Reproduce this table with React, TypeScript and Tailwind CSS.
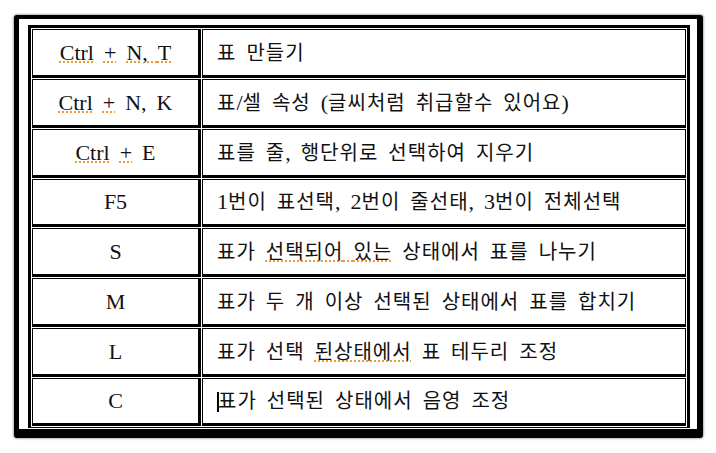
import React from "react";

type Seg = { t: string; u?: boolean };

function Runs({ text }: { text: string }) {
  const parts = text.match(/[\uAC00-\uD7A3\u3131-\u318E]+|\s+|[^\uAC00-\uD7A3\u3131-\u318E\s]+/g) || [];
  return (
    <>
      {parts.map((p, i) =>
        /^\s/.test(p) ? (
          <span key={i} className="tracking-[5px]">
            {p}
          </span>
        ) : /^[\uAC00-\uD7A3\u3131-\u318E]/.test(p) ? (
          <span key={i} className="tracking-[1px]">{p}</span>
        ) : (
          <span key={i} className="text-[22px] tracking-[0px]">
            {p}
          </span>
        )
      )}
    </>
  );
}

function Line({ segs }: { segs: Seg[] }) {
  return (
    <span className="whitespace-pre">
      {segs.map((s, i) =>
        s.u ? (
          <span
            key={i}
            className="underline decoration-dotted decoration-[#ef9a32] decoration-2 underline-offset-[2px]"
          >
            <Runs text={s.t} />
          </span>
        ) : (
          <span key={i}>
            <Runs text={s.t} />
          </span>
        )
      )}
    </span>
  );
}

const rows: { left: Seg[]; right: Seg[]; cursor?: boolean; h: string }[] = [
  {
    left: [{ t: "Ctrl", u: true }, { t: " " }, { t: "+", u: true }, { t: " " }, { t: "N, T", u: true }],
    right: [{ t: "표 만들기" }],
    h: "h-[49px]",
  },
  {
    left: [{ t: "Ctrl", u: true }, { t: " " }, { t: "+", u: true }, { t: " N, K" }],
    right: [{ t: "표/셀 속성 (글씨처럼 취급할수 있어요)" }],
    h: "h-[49px]",
  },
  {
    left: [{ t: "Ctrl", u: true }, { t: " " }, { t: "+", u: true }, { t: " E" }],
    right: [{ t: "표를 줄, 행단위로 선택하여 지우기" }],
    h: "h-[49px]",
  },
  {
    left: [{ t: "F5" }],
    right: [{ t: "1번이 표선택, 2번이 줄선태, 3번이 전체선택" }],
    h: "h-[48px]",
  },
  {
    left: [{ t: "S" }],
    right: [{ t: "표가 " }, { t: "선택되어 있는", u: true }, { t: " 상태에서 표를 나누기" }],
    h: "h-[49px]",
  },
  {
    left: [{ t: "M" }],
    right: [{ t: "표가 두 개 이상 선택된 상태에서 표를 합치기" }],
    h: "h-[49px]",
  },
  {
    left: [{ t: "L" }],
    right: [{ t: "표가 선택 " }, { t: "된상태에서", u: true }, { t: " 표 테두리 조정" }],
    h: "h-[49px]",
  },
  {
    left: [{ t: "C" }],
    right: [{ t: "표가 선택된 상태에서 음영 조정" }],
    cursor: true,
    h: "h-[48px]",
  },
];

export default function App() {
  return (
    <div className="w-[716px] h-[453px] bg-white pl-[14px] pt-[15px] overflow-hidden">
      <div className="w-[689px] h-[423px] border-black border-l-[5px] border-t-[4px] border-r-[6px] border-b-[9px] rounded-[3px] shadow-[0_0_2px_1px_rgba(0,0,0,0.3)] pl-[9px] pr-[7px] pt-[6px] pb-[1px] bg-white">
        <div className="w-[662px] h-[403px] border-black border-t-[3px] border-l-[3px] border-r-[3px] border-b p-[1px]">
          <div className="flex flex-col gap-[1px] font-['Liberation_Serif','Noto_Sans_CJK_KR',serif] text-[20px] text-[#111] leading-none">
            {rows.map((r, i) => (
              <div key={i} className={`flex gap-[1px] ${r.h}`}>
                <div className="w-[169px] h-full border-black border-t border-l border-r-[3px] border-b-[3px] flex items-center justify-center">
                  <Line segs={r.left} />
                </div>
                <div className="w-[484px] h-full border-black border-t border-l border-r border-b-[3px] flex items-center pl-[14px]">
                  {r.cursor && <span className="inline-block w-[2px] h-[20px] bg-black mr-[-1px] translate-y-[1px]" />}
                  <Line segs={r.right} />
                </div>
              </div>
            ))}
          </div>
        </div>
      </div>
    </div>
  );
}
